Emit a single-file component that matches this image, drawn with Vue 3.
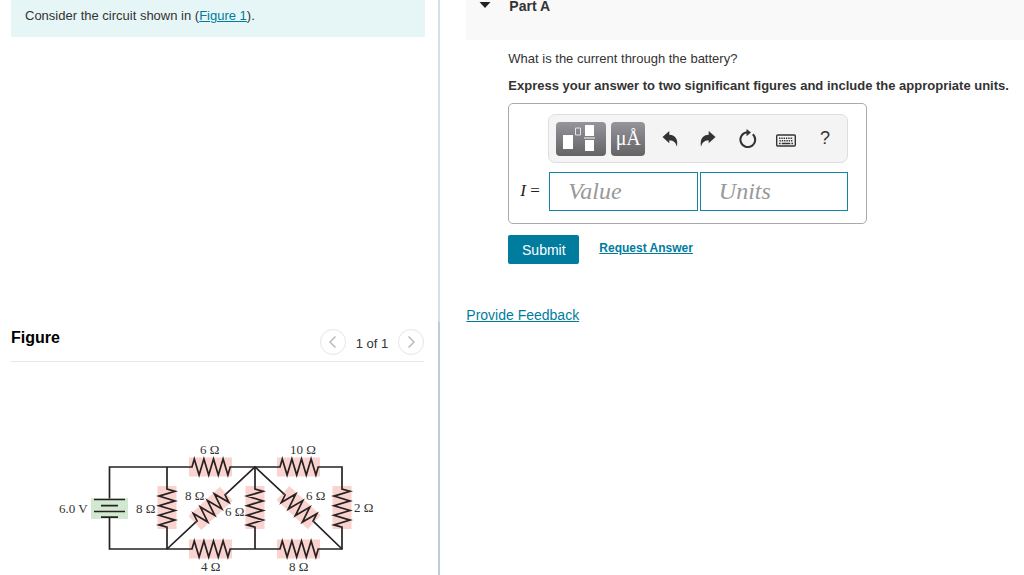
<script setup>
import { ref } from 'vue'

const value = ref('')
const units = ref('')

const resistors = [
  { x: 211, y: 467, angle: 0 },
  { x: 299, y: 467, angle: 0 },
  { x: 211, y: 549, angle: 0 },
  { x: 299, y: 549, angle: 0 },
  { x: 167, y: 508, angle: 90 },
  { x: 255, y: 508, angle: 90 },
  { x: 342, y: 508, angle: 90 },
  { x: 211, y: 508, angle: -43 },
  { x: 299, y: 508, angle: 43, flip: true },
]

const place = (r) => `translate(${r.x} ${r.y}) rotate(${r.angle}) scale(1 ${r.flip ? -1 : 1})`

const labels = [
  { x: 59, y: 513, text: '6.0 V' },
  { x: 136, y: 513, text: '8 Ω' },
  { x: 200, y: 454, text: '6 Ω' },
  { x: 290, y: 454, text: '10 Ω' },
  { x: 185, y: 500, text: '8 Ω' },
  { x: 225, y: 516, text: '6 Ω' },
  { x: 306, y: 500, text: '6 Ω' },
  { x: 354, y: 512, text: '2 Ω' },
  { x: 201, y: 571, text: '4 Ω' },
  { x: 289, y: 571, text: '8 Ω' },
]
</script>

<template>
  <div class="page">
    <div class="left">
      <section class="problem">
        <p class="intro">Consider the circuit shown in (<a href="#figure">Figure 1</a>).</p>
      </section>
      <section id="figure" class="figure">
        <header class="figure-head">
          <h2>Figure</h2>
          <nav class="pager">
            <button type="button" class="round" aria-label="Previous figure">
              <svg width="10" height="14" viewBox="0 0 10 14"><path d="M7.500 1.500 2 7l5.500 5.500" /></svg>
            </button>
            <span>1 of 1</span>
            <button type="button" class="round" aria-label="Next figure">
              <svg width="10" height="14" viewBox="0 0 10 14"><path d="M2.500 1.500 8 7l-5.500 5.500" /></svg>
            </button>
          </nav>
        </header>
        <svg class="circuit" width="360" height="140" viewBox="50 436 360 140" role="img" aria-label="Circuit diagram">
          <rect x="91" y="498" width="37" height="21" fill="#d3e8d1" />
          <g v-for="(r, i) in resistors" :key="'r' + i" :transform="place(r)">
            <rect x="-22" y="-9.500" width="43" height="19" fill="#fad3cf" />
          </g>
          <g class="wire">
            <path d="M109.500 498.500V467H191M231 467h48M319 467h23v21M109.500 518v31H191M231 549h48M319 549h23v-21" />
            <path d="M167 467v21M167 528v21M255 467v21M255 528v21" />
            <path d="M167 549l29.300-27.300M225.600 494.300 255 467l29.400 27.300M313.700 521.700 342 549" />
            <path d="M94 499.500h31M101 505.700h17M94 511.500h31M101 517.200h17" />
            <path
              v-for="(r, i) in resistors"
              :key="'z' + i"
              :transform="place(r)"
              d="M-20 0h1l2.300-8 4.800 16 4.800-16 4.800 16 4.800-16 4.800 16 4.800-16 4.800 16 2.300-8h.8"
            />
          </g>
          <text v-for="(l, i) in labels" :key="'l' + i" :x="l.x" :y="l.y">{{ l.text }}</text>
        </svg>
      </section>
    </div>

    <main class="right">
      <header class="part">
        <svg width="12" height="8" viewBox="0 0 12 8"><path d="M0.500 1h11L6 7z" fill="#222" /></svg>
        <h1>Part A</h1>
      </header>
      <form class="question" @submit.prevent>
        <p>What is the current through the battery?</p>
        <p class="strong">Express your answer to two significant figures and include the appropriate units.</p>
        <div class="answer">
          <div class="toolbar">
            <button type="button" class="dark wide" aria-label="Templates">
              <svg width="50" height="34" viewBox="0 0 50 34">
                <path d="M7 13h10v14H7zM29 3h9v11h-9zM29 18h9v11h-9zM28 15.500h11v1H28z" fill="#fff" />
                <path d="M19.500 6h5v7h-5z" fill="none" stroke="#e4e4e8" />
              </svg>
            </button>
            <button type="button" class="dark units">μÅ</button>
            <button type="button" class="tool" aria-label="Undo">
              <svg width="20" height="20" viewBox="0 0 20 20"><path d="M2.500 8 9.300 2v3.700c5.500.2 9 3.600 7.700 12C16 14 14 11.400 9.300 11.200v3z" /></svg>
            </button>
            <button type="button" class="tool" aria-label="Redo">
              <svg width="20" height="20" viewBox="0 0 20 20"><path d="M17.500 8 10.700 2v3.700c-5.500.2-9 3.600-7.700 12C4 14 6 11.400 10.700 11.200v3z" /></svg>
            </button>
            <button type="button" class="tool" aria-label="Reset">
              <svg width="20" height="20" viewBox="0 0 20 20">
                <path d="M15.800 5.200A7.400 7.400 0 1 1 10 3.300" fill="none" stroke="#333" stroke-width="2" />
                <path d="M9.500 0 14 3.500 9.500 7.300z" />
              </svg>
            </button>
            <button type="button" class="tool" aria-label="Keyboard shortcuts">
              <svg width="20" height="20" viewBox="0 0 20 20">
                <rect x="0.700" y="6" width="18.600" height="11" rx="1" fill="#f4f4f4" stroke="#333" stroke-width="1.400" />
                <path d="M3 9.200h14M3.500 11.700h13" fill="none" stroke="#333" stroke-width="1.500" stroke-dasharray="1.400 .9" />
                <path d="M3 13.700h1.600v1.500H3zM5.700 13.700h8.600v1.500H5.700zM15.400 13.700H17v1.500h-1.600z" />
              </svg>
            </button>
            <button type="button" class="tool help" aria-label="Help">?</button>
          </div>
          <div class="entry">
            <label for="value"><i>I</i> =</label>
            <input id="value" v-model="value" type="text" placeholder="Value" />
            <input v-model="units" type="text" placeholder="Units" aria-label="Units" />
          </div>
        </div>
        <div class="actions">
          <button type="submit" class="submit">Submit</button>
          <a href="#request">Request Answer</a>
        </div>
      </form>
      <a class="feedback" href="#feedback">Provide Feedback</a>
    </main>
  </div>
</template>

<style>
body {
  margin: 0;
  background: #fff;
  overflow: hidden;
}
</style>

<style scoped>
.page {
  display: grid;
  grid-template-columns: 43% 1fr;
  min-height: 100vh;
  font-family: "Liberation Sans", Arial, sans-serif;
  font-size: 13px;
  line-height: 16px;
  color: #333;
}
* {
  box-sizing: border-box;
}
p, h1, h2 {
  margin: 0;
}
a {
  color: #007c9e;
}
button {
  padding: 0;
  border: 0;
  font-family: inherit;
  cursor: pointer;
}
.left {
  display: grid;
  grid-template-rows: 56vh 1fr;
  min-width: 0;
}
.problem {
  padding: 0 13px 0 11px;
  border-right: 2px solid #d3dfea;
}
.intro {
  padding: 8px 14px 13px;
  background: #e6f6f6;
}
.figure {
  padding: 0 14px 0 11px;
  border-right: 2px solid #b9cfe0;
}
.figure-head {
  display: flex;
  justify-content: space-between;
  height: 40px;
  border-bottom: 1px solid #e6e6e6;
}
.figure-head h2 {
  padding-top: 7px;
  font-size: 16px;
  line-height: 18px;
  color: #000;
}
.pager {
  display: flex;
  align-items: flex-start;
  gap: 10px;
  padding-top: 7px;
}
.pager span {
  padding-top: 7px;
  font-size: 13px;
}
.round {
  display: flex;
  align-items: center;
  justify-content: center;
  width: 26px;
  height: 26px;
  border: 1px solid #e6e6e6;
  border-radius: 50%;
  background: #fff;
}
.round path {
  fill: none;
  stroke: #bbb;
  stroke-width: 1.5;
}
.circuit {
  display: block;
  margin: 74px 0 0 39px;
  font-family: "Liberation Serif", serif;
  font-size: 13px;
  fill: #333;
}
.wire {
  fill: none;
  stroke: #262223;
  stroke-width: 1.7;
}
.right {
  min-width: 0;
  padding-left: 26px;
}
.part {
  display: flex;
  gap: 18px;
  height: 40px;
  padding: 0 13px;
  background: #f9f9f9;
}
.part svg {
  margin-top: 1px;
}
.part h1 {
  margin-top: -2px;
  font-size: 14px;
  line-height: 16px;
}
.question {
  padding: 11px 0 0 42px;
}
.question p {
  padding-bottom: 11px;
  white-space: nowrap;
}
.question .strong {
  padding-bottom: 9px;
  font-weight: bold;
}
.answer {
  display: flex;
  flex-direction: column;
  gap: 9px;
  width: 359px;
  padding: 10px 18px 12px 11px;
  border: 1px solid #aaa;
  border-radius: 5px;
}
.toolbar {
  display: flex;
  align-items: center;
  height: 49px;
  margin-left: 28px;
  padding: 0 3px 0 7px;
  border: 1px solid #dedede;
  border-radius: 7px;
  background: #f4f4f4;
}
.dark {
  height: 34px;
  border-radius: 4px;
  background: linear-gradient(#96959c, #636365);
  color: #fff;
}
.wide {
  width: 50px;
  margin-right: 5px;
}
.dark svg {
  display: block;
}
.units {
  width: 34px;
  margin-right: 5px;
  font-family: "Liberation Serif", serif;
  font-size: 20px;
}
.tool {
  display: flex;
  align-items: center;
  justify-content: center;
  width: 39px;
  height: 34px;
  background: none;
  color: #333;
  fill: #333;
}
.help {
  font-size: 18px;
}
.entry {
  display: flex;
  align-items: center;
  gap: 2px;
}
.entry label {
  width: 27px;
  padding-bottom: 2px;
  font-family: "Liberation Serif", serif;
  font-size: 17px;
  color: #222;
}
.entry input {
  flex: 1;
  min-width: 0;
  height: 39px;
  padding: 0 18px;
  border: 1px solid #1585a5;
  border-radius: 0;
  font-family: "Liberation Serif", serif;
  font-size: 24px;
  font-style: italic;
}
.entry input::placeholder {
  color: #999;
}
.actions {
  display: flex;
  align-items: center;
  gap: 20px;
  padding-top: 11px;
}
.actions a {
  padding-bottom: 3px;
  font-weight: bold;
  font-size: 12px;
}
.submit {
  width: 71px;
  height: 29px;
  border-radius: 2px;
  background: #007c9e;
  color: #fff;
  font-size: 14px;
}
.feedback {
  display: inline-block;
  margin-top: 43px;
  font-size: 14px;
}
</style>
